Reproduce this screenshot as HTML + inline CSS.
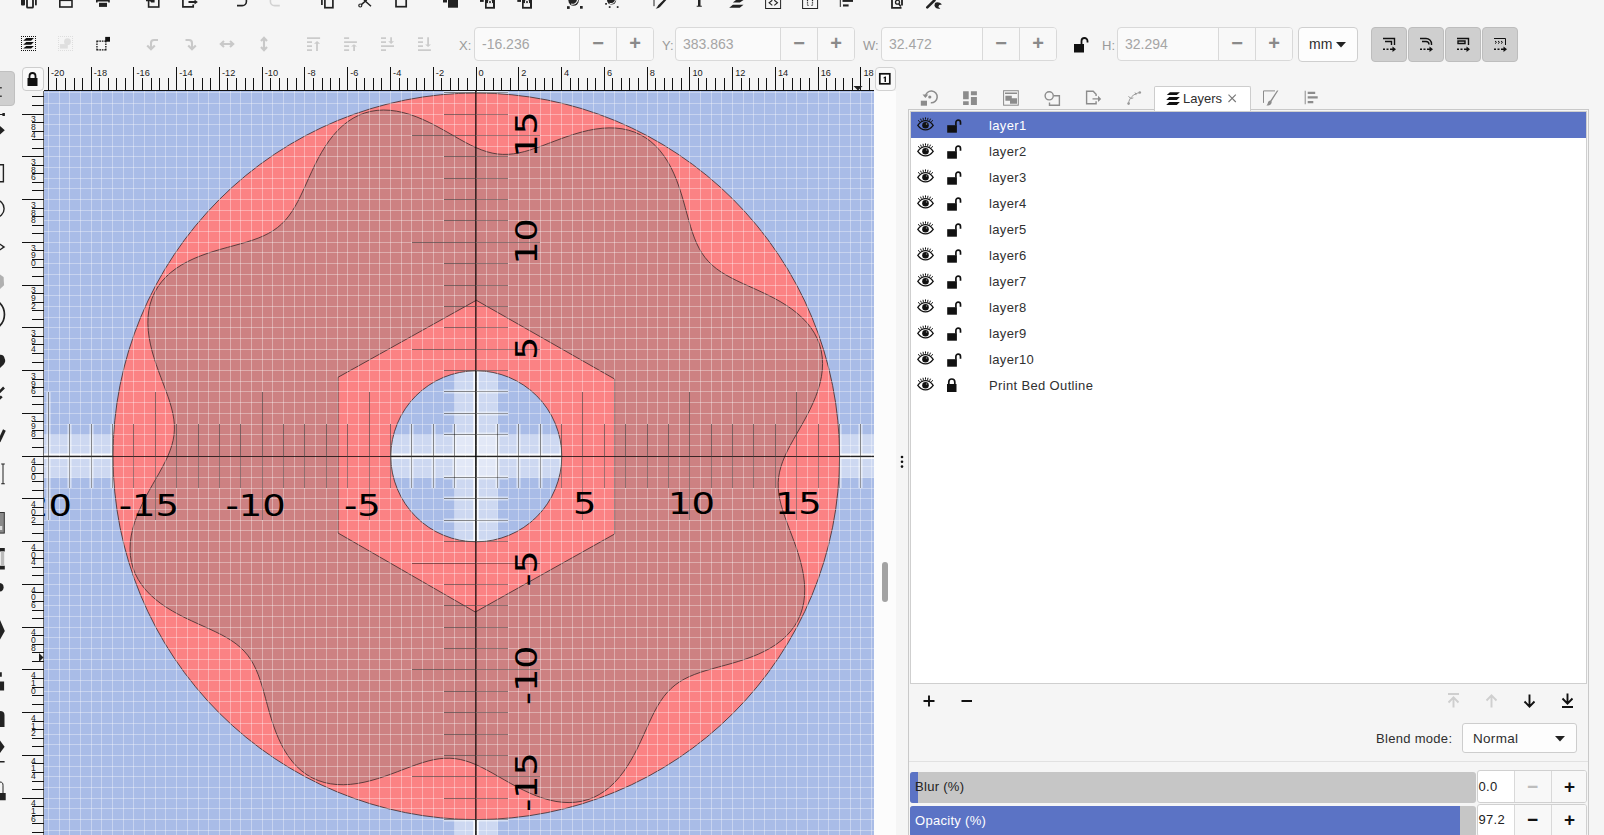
<!DOCTYPE html>
<html><head><meta charset="utf-8"><title>Inkscape</title>
<style>
*{box-sizing:border-box;margin:0;padding:0}
html,body{width:1604px;height:835px;overflow:hidden;background:#f5f5f5;font-family:"Liberation Sans",sans-serif;font-size:13px;color:#2e2e2e}
.abs,.cv,.b,.t,.i{position:absolute}
svg{display:block;overflow:hidden}
.fld{position:absolute;top:27px;height:34px;border:1px solid #d9d9d9;background:#fafafa;border-radius:4px;display:flex;overflow:hidden}
.fld span{display:block;height:100%;line-height:32px;color:#a5a5a5;font-size:14px}
.fld .v{padding-left:7px;flex:1}
.fld .m,.fld .p{width:37px;border-left:1px solid #d9d9d9;text-align:center;font-size:20px;font-weight:bold;color:#8a8a8a;background:#f8f8f8;line-height:31px}
.lab{position:absolute;top:38px;font-size:13px;color:#9a9a9a}
.tb{position:absolute;top:27px;height:35px;width:36px;background:#cfcfcf;border:1px solid #bdbdbd;border-radius:4px}
.row{position:absolute;left:911px;width:675px;height:26px;line-height:26px}
.row b{position:absolute;left:78px;top:.7px;letter-spacing:.35px;font-weight:normal;font-size:13px;color:#303030}
.row.sel{background:#5b73c5}
.row.sel b{color:#fff}
</style></head><body>

<!-- top command bar icons (cropped) -->
<svg class="abs" style="left:0;top:0" width="1604" height="14" viewBox="0 0 1604 14">
<g fill="#222" stroke="none">
<rect x="21" y="-2" width="4" height="7.600" rx="1"/><rect x="35" y="-2" width="1.800" height="7.600" rx=".8"/>
<path d="M96 0h13.800v2.600h-1.600v-1h-10.600v1H96z"/><rect x="99" y="2.800" width="8" height="4.100"/>
<path d="M146 0h8.600v2.400h-3.400l-1-1.100H146z"/>
<path d="M188.500 1h6v-1.400l3.400 2.400-3.400 2.400V3h-6z"/>
<rect x="448" y="-1" width="10" height="8.700"/><rect x="443" y="-1" width="4" height="3.500"/>
<rect x="485" y="-1" width="10" height="9.700"/><rect x="480" y="-1" width="3.700" height="2.900"/>
<rect x="522" y="-1" width="10" height="9.700"/><rect x="517.300" y="-1" width="3.700" height="2.900"/>
<circle cx="573.600" cy=".5" r="5.200"/><rect x="567" y="6.200" width="2.700" height="2.700"/><rect x="580" y="6" width="2.700" height="2.700"/>
<circle cx="611.600" cy="0" r="4.600"/><rect x="605.200" y="3" width="1.700" height="1.700"/><rect x="608.800" y="6.200" width="1.700" height="1.700"/><rect x="616.800" y="6.200" width="1.700" height="1.700"/>
<path d="M655.400 8.300c1.200-.2 2.200-1.800 3-3.300L663.500 0h2.800l-5.600 6.200c-1 1.400-3 2.500-5.300 2.100z"/>
<path d="M698 0h2.500v5.700h1.300v1.100h-5.100V5.700H698z"/>
<path d="M732.900 2.500L736 0h7.500l-3.700 2.500zM729.200 7.700l3.700-3h10.600l-3.700 3z"/>
<rect x="842.500" y="-1" width="10.500" height="2.900"/><rect x="843" y="4.400" width="5.600" height="2.100"/>
<path d="M935 3c2-1.300 5.200-.6 6.900 1.600l-2.700.4-.9 2.100 2 1.500c-2.600.8-5.400-.6-5.900-3.100z"/>
</g>
<g fill="#f5f5f5"><rect x="486.700" y="3.100" width="6.300" height="3.800"/><path d="M488 3.200V1.500a2 2 0 0 1 4 0v1.700h-1.200V1.600a.8.800 0 0 0-1.600 0v1.600z"/>
<rect x="523.700" y="3.100" width="6.300" height="3.800"/><path d="M525 3.200V1.500a2 2 0 0 1 4 0v1.700h-1.200V1.600a.8.800 0 0 0-1.600 0v1.600z"/>
<path d="M571 3.500a4.500 4.500 0 0 0 6-4.200l1.200.2a5.500 5.500 0 0 1-7.200 5z"/><path d="M609.500 2.800a4 4 0 0 0 5.500-3.500l1 .2a5 5 0 0 1-6.500 4.200z"/></g>
<g fill="none" stroke="#222">
<rect x="27" y="-2" width="6" height="9.700" rx=".8" stroke-width="1.800"/>
<rect x="59.800" y=".3" width="12.200" height="6.700" stroke-width="1.600"/>
<rect x="148.600" y="-2" width="10.200" height="9" stroke-width="1.600"/>
<path d="M182.900 0v6.900h10.300V4.400" stroke-width="1.700"/>
<path d="M237 5.600h5.200a4.200 4.200 0 0 0 4.200-4.200V0" stroke-width="1.600"/>
<path d="M321.900 0v5" stroke-width="1.700"/><rect x="324.900" y="-2" width="8" height="9.700" stroke-width="1.700"/>
<circle cx="360.300" cy="5.500" r="1.500" stroke-width="1.200"/><path d="M361.600 4.300L366.800 0M364 0l7 6.300" stroke-width="1.500"/>
<rect x="396" y="-2" width="10.200" height="8.700" stroke-width="1.700"/>
<path d="M654 0v6.200" stroke-width="1"/>
<rect x="765.600" y="-2" width="15" height="10.500" stroke-width="1"/><path d="M772.300 .2l-3.200 2.600 3.200 2.600M774.300 .2l3.200 2.600-3.200 2.600" stroke-width="1.100"/>
<rect x="802.600" y="-2" width="15" height="10.500" stroke-width="1"/><path d="M807.500 0v4.500q0 1 1 1M812.500 0v4.500q0 1-1 1" stroke-width="1.200" stroke-dasharray="1 .7"/>
<path d="M840.300 0v6.900" stroke-width="1"/>
<path d="M892 0v7.800h9.500M902 0v5.500" stroke-width="1.800"/><circle cx="897.500" cy="2.200" r="2" stroke-width="1.300"/><path d="M899 4l1.800 2.500" stroke-width="1.500"/>
<path d="M927.300 7.400L934.500 .3" stroke-width="2.600" stroke-linecap="round"/>
</g>
<path d="M279.800 5.600h-5.200a4.200 4.200 0 0 1-4.200-4.200V0" fill="none" stroke="#d2d2d2" stroke-width="1.600"/>
</svg>

<!-- tool controls bar icons -->
<svg class="abs" style="left:0;top:27px" width="460" height="34" viewBox="0 27 460 34">
<!-- layers w/ dotted border -->
<path d="M21 36.500H36M21 50.500H36M21.500 36V51M35.500 36V51" fill="none" stroke="#111" stroke-width="1" stroke-dasharray="1 1"/>
<path d="M26.300 38.100h7.600l-2.800 2.600h-7.900zM26.300 42h7.600l-2.800 2.800h-7.900zM26.300 46h7.600l-2.800 2.600h-7.900z" fill="#111"/>
<!-- disabled -->
<path d="M58 36.500H73M58 50.500H73M58.500 36V51M72.500 36V51" fill="none" stroke="#dedede" stroke-width="1" stroke-dasharray="1 1"/>
<circle cx="67.500" cy="41.700" r="3.400" fill="#dfdfdf"/><rect x="59.900" y="44.100" width="7.900" height="4.500" fill="#dfdfdf"/>
<!-- dashed square -->
<path d="M96.3 41.05H98.5M99.3 41.05H101M101.8 41.05H103.5M104.3 41.05H106.5M96.3 49.95H98.5M99.3 49.95H101M101.8 49.95H103.5M104.3 49.95H106.5M96.95 40.40V42.60M96.95 43.40V45.10M96.95 45.90V47.60M96.95 48.40V50.60M105.85 40.40V42.60M105.85 43.40V45.10M105.85 45.90V47.60M105.85 48.40V50.60" fill="none" stroke="#111" stroke-width="1.300"/>
<rect x="105.200" y="36.900" width="4.800" height="4.800" fill="#111"/>
<g fill="none" stroke="#c9c9c9" stroke-width="2.100" stroke-linecap="butt" stroke-linejoin="miter">
<path d="M158 40h-4a3 3 0 0 0-3 3v6M147.200 45.500l3.800 3.800 3.800-3.800"/>
<path d="M185.500 40h3.500a3 3 0 0 1 3 3v6M188.200 45.500l3.800 3.800 3.800-3.800"/>
<path d="M221 44h12M224 41l-3.200 3 3.200 3M230 41l3.200 3-3.200 3"/>
<path d="M264 38v12M261 41l3-3.200 3 3.200M261 47l3 3.200 3-3.200"/>
</g>
<path d="M307 37.2h13.1v1.7h-13.1zM307 41.2h5v1.7h-5zM307 45.3h5v1.7h-5zM307 49.2h5v1.7h-5zM316.100 50.900V43.800h-2.100l3.050-2.800 3.050 2.800h-2.200v7.100zM344.1 37.2h5v1.7h-5zM344.1 41.2h12.8v1.7h-12.8zM344.1 45.3h5v1.7h-5zM344.1 49.2h5v1.7h-5zM353.200 50.900V46.600h-2.200l3-2.400 3 2.400h-2v4.300zM381 37.2h5v1.7h-5zM381 41.2h5v1.7h-5zM381 45.3h13v1.7h-13zM381 49.2h5v1.7h-5zM390.200 37.200v4.100h-2l2.900 2.600 2.900-2.600h-2v-4.100zM418 37.2h5v1.7h-5zM418 41.2h5v1.7h-5zM418 45.3h5v1.7h-5zM418 49.2h12.9v1.7h-12.9zM427.200 37.200v7.200h-2.100l2.950 2.500 2.950-2.500h-2v-7.200z" fill="#cbcbcb"/>
</svg>

<!-- XYWH fields -->
<div class="lab" style="left:459px">X:</div>
<div class="fld" style="left:474px;width:180px"><span class="v">-16.236</span><span class="m">−</span><span class="p">+</span></div>
<div class="lab" style="left:662px">Y:</div>
<div class="fld" style="left:675px;width:180px"><span class="v">383.863</span><span class="m">−</span><span class="p">+</span></div>
<div class="lab" style="left:863px">W:</div>
<div class="fld" style="left:881px;width:176px"><span class="v">32.472</span><span class="m">−</span><span class="p">+</span></div>
<svg class="abs" style="left:1072px;top:35px" width="18" height="19" viewBox="0 0 18 19"><rect x="2" y="9" width="10" height="8.500" fill="#111"/><path d="M9.500 9V6a3 3 0 0 1 6 0v1.500" fill="none" stroke="#111" stroke-width="1.800"/></svg>
<div class="lab" style="left:1102px">H:</div>
<div class="fld" style="left:1117px;width:176px"><span class="v">32.294</span><span class="m">−</span><span class="p">+</span></div>
<div class="abs" style="left:1298px;top:27px;width:60px;height:35px;border:1px solid #cfcfcf;border-radius:4px;background:#fdfdfd;line-height:32px;padding-left:10px;font-size:14px;color:#2e2e2e">mm<svg class="abs" style="left:37px;top:14px" width="10" height="6" viewBox="0 0 10 6"><path d="M0 0h10l-5 5.500z" fill="#222"/></svg></div>

<div class="tb" style="left:1371px"></div><div class="tb" style="left:1408px"></div><div class="tb" style="left:1445px"></div><div class="tb" style="left:1482px"></div>
<svg class="abs" style="left:1371px;top:27px" width="150" height="35" viewBox="1371 27 150 35">
<g fill="none" stroke="#111" stroke-width="1.400">
<path d="M1383 38.500h11.500V45M1385 41.500h6.500V45"/>
<path d="M1420 38.500h6a5.500 5.500 0 0 1 5.500 5.500v1M1422 41.500h4a3 3 0 0 1 3 3"/>
<path d="M1457 38.500h11.500V45M1458 41h7v2.500h-7z"/>
<path d="M1494 38.500h11.500V45M1495 41l1.500 1.300-1.500 1.300M1498 41l1.500 1.300-1.500 1.300M1501 41l1.500 1.300-1.500 1.300" stroke-width="1"/>
</g>
<g fill="#111">
<path d="M1383 48.500h2v1.500h-2zM1386.500 48.500h2v1.500h-2zM1390 48.500h2.500v-2l3.500 2.800-3.500 2.800v-2h-2.500z"/>
<path d="M1420 48.500h2v1.500h-2zM1423.500 48.500h2v1.500h-2zM1427 48.500h2.500v-2l3.500 2.800-3.500 2.800v-2h-2.500z"/>
<path d="M1457 48.500h2v1.500h-2zM1460.500 48.500h2v1.500h-2zM1464 48.500h2.500v-2l3.500 2.800-3.500 2.800v-2h-2.500z"/>
<path d="M1494 48.500h2v1.500h-2zM1497.500 48.500h2v1.500h-2zM1501 48.500h2.500v-2l3.500 2.800-3.500 2.800v-2h-2.500z"/>
</g></svg>

<!-- left toolbox (cropped) -->
<div class="abs" style="left:-6px;top:71px;width:21px;height:35px;background:#cfcfcf;border:1px solid #c0c0c0;border-radius:4px"></div>
<svg class="abs" style="left:0;top:60px" width="16" height="775" viewBox="0 60 16 775">
<g fill="#222">
<path d="M0 87h1.800v1.400H0zM0 95.500h1.800v1.400H0z" fill="#444"/>
<path d="M0 114h2.400v-1.100h2.500v3.200H2.400v-1H0zM0 126l4.800 4.200L0 134.500z"/>
<path d="M0 164h4.100v18.400H0v-1.400h2.700v-15.600H0z"/>
<circle cx="-4.900" cy="208.650" r="9" fill="none" stroke="#222" stroke-width="1.400"/>
<path d="M0 243.400l5.300 3.600L0 250.600v-1.600l2.800-2L0 245z"/>
<path d="M0 274.600l3.600 2.400.5 8.300L0 289z" fill="#b0b0b0"/>
<circle cx="-11.850" cy="314.400" r="16.300" fill="none" stroke="#222" stroke-width="1.700"/>
<path d="M0 354.800c2.500-.3 4.400 1.400 4.600 3.600.6 1 .9 2.600.2 4.200-.8 1.900-2.600 3.600-4.800 5.400z"/>
<path d="M-1 392.500l5-5M-1 399l2.800-2.600" stroke="#222" stroke-width="2.600" fill="none"/>
<path d="M-1 441.500l5.400-11.500" stroke="#222" stroke-width="3" fill="none"/>
<path d="M1.200 463.400h3.600v1H3.500v18.800h1.300v1H1.200v-1h1.300v-18.800H1.200z"/>
<path d="M0 548h4.800v3.400H0zM0 565.800h4.800v3.700H0z"/>
<path d="M0 583c2.200.2 3.600 1.800 3.600 4.200S2.200 591.300 0 591.500z"/>
<path d="M0 620l4.800 11L0 639.400z"/>
<path d="M0 672.300h1.800v4.500H0zM0 681.400h4.100v9.100H0z"/>
<path d="M0 711c3 0 4.500 1.600 4.500 4v12H0z"/>
<path d="M0 740.600l4.600 6.200L0 753z"/>
<path d="M0 761h4.600v1.400H0zM0 793h5.700v7.200H0z"/>
</g>
<rect x="-1" y="512.500" width="5.300" height="20.600" fill="#8a8a8a" stroke="#333" stroke-width="1"/><rect x="0" y="526" width="2.200" height="4" fill="#ddd"/>
<rect x=".8" y="551.400" width="3.400" height="14.400" fill="#bbb"/>
<path d="M0 782c2.200 0 3 1.200 3 3.200V793" fill="none" stroke="#222" stroke-width="1"/>
</svg>

<!-- ruler lock + page button -->
<div class="abs" style="left:22px;top:67px;width:22px;height:23.500px;border:1px solid #cdcdcd;border-radius:4px;background:#f9f9f9"></div>
<svg class="abs" style="left:26px;top:71px" width="14" height="16" viewBox="0 0 14 16"><rect x="1.500" y="7" width="10" height="8" fill="#111"/><path d="M3.500 7.500V5a3 3 0 0 1 6 0v2.500" fill="none" stroke="#111" stroke-width="1.800"/></svg>
<div class="abs" style="left:874.500px;top:67px;width:21.500px;height:23.500px;border:1px solid #d2d2d2;border-radius:4px;background:#f9f9f9"></div>
<svg class="abs" style="left:878px;top:72px" width="14" height="14" viewBox="0 0 14 14"><rect x="1.800" y="1.800" width="10" height="10" fill="#fff" stroke="#111" stroke-width="1.700"/><path d="M5.500 5.500l1.500-1h1v5.500H6.500V6l-1 .5z" fill="#111"/></svg>

<svg class="abs" style="left:0;top:60px" width="900" height="40" viewBox="0 60 900 40">
<path d="M48.5 67V91M56.5 78V91M65.5 78V91M74.5 78V91M82.5 78V91M91.5 67V91M99.5 78V91M108.5 78V91M116.5 78V91M125.5 78V91M133.5 67V91M142.5 78V91M151.5 78V91M159.5 78V91M168.5 78V91M176.5 67V91M185.5 78V91M193.5 78V91M202.5 78V91M210.5 78V91M219.5 67V91M227.5 78V91M236.5 78V91M245.5 78V91M253.5 78V91M262.5 67V91M270.5 78V91M279.5 78V91M287.5 78V91M296.5 78V91M304.5 67V91M313.5 78V91M322.5 78V91M330.5 78V91M339.5 78V91M347.5 67V91M356.5 78V91M364.5 78V91M373.5 78V91M381.5 78V91M390.5 67V91M399.5 78V91M407.5 78V91M416.5 78V91M424.5 78V91M433.5 67V91M441.5 78V91M450.5 78V91M458.5 78V91M467.5 78V91M476.5 67V91M484.5 78V91M493.5 78V91M501.5 78V91M510.5 78V91M518.5 67V91M527.5 78V91M535.5 78V91M544.5 78V91M552.5 78V91M561.5 67V91M570.5 78V91M578.5 78V91M587.5 78V91M595.5 78V91M604.5 67V91M612.5 78V91M621.5 78V91M629.5 78V91M638.5 78V91M647.5 67V91M655.5 78V91M664.5 78V91M672.5 78V91M681.5 78V91M689.5 67V91M698.5 78V91M706.5 78V91M715.5 78V91M724.5 78V91M732.5 67V91M741.5 78V91M749.5 78V91M758.5 78V91M766.5 78V91M775.5 67V91M783.5 78V91M792.5 78V91M800.5 78V91M809.5 78V91M818.5 67V91M826.5 78V91M835.5 78V91M843.5 78V91M852.5 78V91M860.5 67V91M869.5 78V91" stroke="#111" stroke-width="1" fill="none"/>
<path d="M44 90.5H874" stroke="#111" stroke-width="1.2"/>
<g font-family="Liberation Sans, sans-serif" font-size="9.2" fill="#222">
<text x="51" y="76.3">-20</text>
<text x="93.76" y="76.3">-18</text>
<text x="136.52" y="76.3">-16</text>
<text x="179.28" y="76.3">-14</text>
<text x="222.04" y="76.3">-12</text>
<text x="264.8" y="76.3">-10</text>
<text x="307.56" y="76.3">-8</text>
<text x="350.32" y="76.3">-6</text>
<text x="393.08" y="76.3">-4</text>
<text x="435.84" y="76.3">-2</text>
<text x="478.6" y="76.3">0</text>
<text x="521.36" y="76.3">2</text>
<text x="564.12" y="76.3">4</text>
<text x="606.88" y="76.3">6</text>
<text x="649.64" y="76.3">8</text>
<text x="692.4" y="76.3">10</text>
<text x="735.16" y="76.3">12</text>
<text x="777.92" y="76.3">14</text>
<text x="820.68" y="76.3">16</text>
<text x="863.44" y="76.3">18</text>
</g>
<path d="M853.5 86h9l-4.5 4.5z" fill="#222"/>
</svg>
<svg class="abs" style="left:20px;top:91px" width="25" height="744" viewBox="20 91 25 744">
<path d="M32 96.5H44M32 105.5H44M22 114.5H44M32 122.5H44M32 131.5H44M32 139.5H44M32 148.5H44M22 156.5H44M32 165.5H44M32 173.5H44M32 182.5H44M32 190.5H44M22 199.5H44M32 208.5H44M32 216.5H44M32 225.5H44M32 233.5H44M22 242.5H44M32 250.5H44M32 259.5H44M32 267.5H44M32 276.5H44M22 285.5H44M32 293.5H44M32 302.5H44M32 310.5H44M32 319.5H44M22 327.5H44M32 336.5H44M32 344.5H44M32 353.5H44M32 362.5H44M22 370.5H44M32 379.5H44M32 387.5H44M32 396.5H44M32 404.5H44M22 413.5H44M32 421.5H44M32 430.5H44M32 438.5H44M32 447.5H44M22 456.5H44M32 464.5H44M32 473.5H44M32 481.5H44M32 490.5H44M22 498.5H44M32 507.5H44M32 515.5H44M32 524.5H44M32 533.5H44M22 541.5H44M32 550.5H44M32 558.5H44M32 567.5H44M32 575.5H44M22 584.5H44M32 592.5H44M32 601.5H44M32 610.5H44M32 618.5H44M22 627.5H44M32 635.5H44M32 644.5H44M32 652.5H44M32 661.5H44M22 669.5H44M32 678.5H44M32 687.5H44M32 695.5H44M32 704.5H44M22 712.5H44M32 721.5H44M32 729.5H44M32 738.5H44M32 746.5H44M22 755.5H44M32 763.5H44M32 772.5H44M32 781.5H44M32 789.5H44M22 798.5H44M32 806.5H44M32 815.5H44M32 823.5H44M32 832.5H44" stroke="#111" stroke-width="1" fill="none"/>
<path d="M44 91V835" stroke="#111" stroke-width="1.2"/>
<g font-family="Liberation Sans, sans-serif" font-size="8.6" fill="#222" text-anchor="middle">
<text x="33.4" y="122.32">3</text>
<text x="33.4" y="130.02">8</text>
<text x="33.4" y="137.72">4</text>
<text x="33.4" y="165.08">3</text>
<text x="33.4" y="172.78">8</text>
<text x="33.4" y="180.48">6</text>
<text x="33.4" y="207.84">3</text>
<text x="33.4" y="215.54">8</text>
<text x="33.4" y="223.24">8</text>
<text x="33.4" y="250.6">3</text>
<text x="33.4" y="258.3">9</text>
<text x="33.4" y="266">0</text>
<text x="33.4" y="293.36">3</text>
<text x="33.4" y="301.06">9</text>
<text x="33.4" y="308.76">2</text>
<text x="33.4" y="336.12">3</text>
<text x="33.4" y="343.82">9</text>
<text x="33.4" y="351.52">4</text>
<text x="33.4" y="378.88">3</text>
<text x="33.4" y="386.58">9</text>
<text x="33.4" y="394.28">6</text>
<text x="33.4" y="421.64">3</text>
<text x="33.4" y="429.34">9</text>
<text x="33.4" y="437.04">8</text>
<text x="33.4" y="464.4">4</text>
<text x="33.4" y="472.1">0</text>
<text x="33.4" y="479.8">0</text>
<text x="33.4" y="507.16">4</text>
<text x="33.4" y="514.86">0</text>
<text x="33.4" y="522.56">2</text>
<text x="33.4" y="549.92">4</text>
<text x="33.4" y="557.62">0</text>
<text x="33.4" y="565.32">4</text>
<text x="33.4" y="592.68">4</text>
<text x="33.4" y="600.38">0</text>
<text x="33.4" y="608.08">6</text>
<text x="33.4" y="635.44">4</text>
<text x="33.4" y="643.14">0</text>
<text x="33.4" y="650.84">8</text>
<text x="33.4" y="678.2">4</text>
<text x="33.4" y="685.9">1</text>
<text x="33.4" y="693.6">0</text>
<text x="33.4" y="720.96">4</text>
<text x="33.4" y="728.66">1</text>
<text x="33.4" y="736.36">2</text>
<text x="33.4" y="763.72">4</text>
<text x="33.4" y="771.42">1</text>
<text x="33.4" y="779.12">4</text>
<text x="33.4" y="806.48">4</text>
<text x="33.4" y="814.18">1</text>
<text x="33.4" y="821.88">6</text>
</g>
<path d="M39 653v9l4.5-4.5z" fill="#222"/>
</svg>
<svg class="cv" style="left:44px;top:91px" width="830" height="744" viewBox="44 91 830 744">
<rect x="44" y="91" width="830" height="744" fill="#a9bce7"/>
<rect x="44" y="434.93" width="830" height="42.74" fill="#fff" fill-opacity=".42"/>
<rect x="454.93" y="91" width="42.74" height="744" fill="#fff" fill-opacity=".42"/>
<path d="M44 456.2H874M476 91V835" stroke="#fff" stroke-opacity=".85" stroke-width="5.4" fill="none"/>
<path d="M48.5 392V520M69.5 424V488M91.5 424V488M112.5 424V488M133.5 424V488M155.5 392V520M176.5 424V488M198.5 424V488M219.5 424V488M240.5 424V488M262.5 392V520M283.5 424V488M304.5 424V488M326.5 424V488M347.5 424V488M369.5 392V520M390.5 424V488M411.5 424V488M433.5 424V488M454.5 424V488M497.5 424V488M518.5 424V488M540.5 424V488M561.5 424V488M582.5 392V520M604.5 424V488M625.5 424V488M647.5 424V488M668.5 424V488M689.5 392V520M711.5 424V488M732.5 424V488M753.5 424V488M775.5 424V488M796.5 392V520M818.5 424V488M839.5 424V488M860.5 424V488M444 819.5H508M444 798.5H508M412 776.5H540M444 755.5H508M444 734.5H508M444 712.5H508M444 691.5H508M412 669.5H540M444 648.5H508M444 627.5H508M444 605.5H508M444 584.5H508M412 563.5H540M444 541.5H508M444 520.5H508M444 498.5H508M444 477.5H508M444 434.5H508M444 413.5H508M444 391.5H508M444 370.5H508M412 349.5H540M444 327.5H508M444 306.5H508M444 285.5H508M444 263.5H508M412 242.5H540M444 220.5H508M444 199.5H508M444 178.5H508M444 156.5H508M412 135.5H540M444 114.5H508M444 92.5H508" stroke="#fff" stroke-opacity=".5" stroke-width="4.2" fill="none"/>
<path d="M476 91V835M44 456.4H874" stroke="#000" stroke-opacity=".5" stroke-width="1.6" fill="none"/>
<circle cx="476.3" cy="456.3" r="363.29" fill="#fb8284" stroke="#3a2a2a" stroke-width=".8"/>
<path d="M784.84 456.3 L787.39 450.87 L790.25 445.34 L793.36 439.68 L796.65 433.9 L800.05 427.98 L803.47 421.91 L806.83 415.72 L810.06 409.39 L813.06 402.96 L815.78 396.44 L818.12 389.86 L820.03 383.24 L821.44 376.62 L822.3 370.03 L822.58 363.52 L822.24 357.1 L821.26 350.84 L819.63 344.74 L817.37 338.86 L814.47 333.21 L810.98 327.83 L806.93 322.72 L802.36 317.9 L797.32 313.37 L791.89 309.14 L786.13 305.19 L780.1 301.51 L773.88 298.07 L767.56 294.85 L761.2 291.82 L754.87 288.92 L748.64 286.12 L742.58 283.38 L736.74 280.63 L731.17 277.84 L725.91 274.95 L721 271.91 L716.45 268.68 L712.27 265.22 L708.47 261.49 L705.03 257.47 L701.94 253.13 L699.18 248.46 L696.7 243.46 L694.47 238.13 L692.44 232.49 L690.55 226.55 L688.75 220.35 L686.98 213.94 L685.2 207.35 L683.33 200.64 L681.32 193.88 L679.13 187.13 L676.71 180.46 L674.02 173.93 L671.02 167.62 L667.69 161.59 L664.01 155.91 L659.96 150.64 L655.55 145.84 L650.77 141.54 L645.65 137.81 L640.19 134.65 L634.43 132.09 L628.39 130.14 L622.11 128.8 L615.63 128.05 L608.99 127.88 L602.23 128.24 L595.4 129.08 L588.53 130.37 L581.66 132.03 L574.84 133.99 L568.09 136.19 L561.44 138.54 L554.92 140.97 L548.54 143.39 L542.31 145.74 L536.24 147.93 L530.33 149.89 L524.57 151.56 L518.94 152.89 L513.44 153.82 L508.04 154.33 L502.71 154.38 L497.44 153.97 L492.19 153.08 L486.94 151.74 L481.65 149.95 L476.3 147.76 L470.87 145.21 L465.34 142.35 L459.68 139.24 L453.9 135.95 L447.98 132.55 L441.91 129.13 L435.72 125.77 L429.39 122.54 L422.96 119.54 L416.44 116.82 L409.86 114.48 L403.24 112.57 L396.62 111.16 L390.03 110.3 L383.52 110.02 L377.1 110.36 L370.84 111.34 L364.74 112.97 L358.86 115.23 L353.21 118.13 L347.83 121.62 L342.72 125.67 L337.9 130.24 L333.37 135.28 L329.14 140.71 L325.19 146.47 L321.51 152.5 L318.07 158.72 L314.85 165.04 L311.82 171.4 L308.92 177.73 L306.12 183.96 L303.38 190.02 L300.63 195.86 L297.84 201.43 L294.95 206.69 L291.91 211.6 L288.68 216.15 L285.22 220.33 L281.49 224.13 L277.47 227.57 L273.13 230.66 L268.46 233.42 L263.46 235.9 L258.13 238.13 L252.49 240.16 L246.55 242.05 L240.35 243.85 L233.94 245.62 L227.35 247.4 L220.64 249.27 L213.88 251.28 L207.13 253.47 L200.46 255.89 L193.93 258.58 L187.62 261.58 L181.59 264.91 L175.91 268.59 L170.64 272.64 L165.84 277.05 L161.54 281.83 L157.81 286.95 L154.65 292.41 L152.09 298.17 L150.14 304.21 L148.8 310.49 L148.05 316.97 L147.88 323.61 L148.24 330.37 L149.08 337.2 L150.37 344.07 L152.03 350.94 L153.99 357.76 L156.19 364.51 L158.54 371.16 L160.97 377.68 L163.39 384.06 L165.74 390.29 L167.93 396.36 L169.89 402.27 L171.56 408.03 L172.89 413.66 L173.82 419.16 L174.33 424.56 L174.38 429.89 L173.97 435.16 L173.08 440.41 L171.74 445.66 L169.95 450.95 L167.76 456.3 L165.21 461.73 L162.35 467.26 L159.24 472.92 L155.95 478.7 L152.55 484.62 L149.13 490.69 L145.77 496.88 L142.54 503.21 L139.54 509.64 L136.82 516.16 L134.48 522.74 L132.57 529.36 L131.16 535.98 L130.3 542.57 L130.02 549.08 L130.36 555.5 L131.34 561.76 L132.97 567.86 L135.23 573.74 L138.13 579.39 L141.62 584.77 L145.67 589.88 L150.24 594.7 L155.28 599.23 L160.71 603.46 L166.47 607.41 L172.5 611.09 L178.72 614.53 L185.04 617.75 L191.4 620.78 L197.73 623.68 L203.96 626.48 L210.02 629.22 L215.86 631.97 L221.43 634.76 L226.69 637.65 L231.6 640.69 L236.15 643.92 L240.33 647.38 L244.13 651.11 L247.57 655.13 L250.66 659.47 L253.42 664.14 L255.9 669.14 L258.13 674.47 L260.16 680.11 L262.05 686.05 L263.85 692.25 L265.62 698.66 L267.4 705.25 L269.27 711.96 L271.28 718.72 L273.47 725.47 L275.89 732.14 L278.58 738.67 L281.58 744.98 L284.91 751.01 L288.59 756.69 L292.64 761.96 L297.05 766.76 L301.83 771.06 L306.95 774.79 L312.41 777.95 L318.17 780.51 L324.21 782.46 L330.49 783.8 L336.97 784.55 L343.61 784.72 L350.37 784.36 L357.2 783.52 L364.07 782.23 L370.94 780.57 L377.76 778.61 L384.51 776.41 L391.16 774.06 L397.68 771.63 L404.06 769.21 L410.29 766.86 L416.36 764.67 L422.27 762.71 L428.03 761.04 L433.66 759.71 L439.16 758.78 L444.56 758.27 L449.89 758.22 L455.16 758.63 L460.41 759.52 L465.66 760.86 L470.95 762.65 L476.3 764.84 L481.73 767.39 L487.26 770.25 L492.92 773.36 L498.7 776.65 L504.62 780.05 L510.69 783.47 L516.88 786.83 L523.21 790.06 L529.64 793.06 L536.16 795.78 L542.74 798.12 L549.36 800.03 L555.98 801.44 L562.57 802.3 L569.08 802.58 L575.5 802.24 L581.76 801.26 L587.86 799.63 L593.74 797.37 L599.39 794.47 L604.77 790.98 L609.88 786.93 L614.7 782.36 L619.23 777.32 L623.46 771.89 L627.41 766.13 L631.09 760.1 L634.53 753.88 L637.75 747.56 L640.78 741.2 L643.68 734.87 L646.48 728.64 L649.22 722.58 L651.97 716.74 L654.76 711.17 L657.65 705.91 L660.69 701 L663.92 696.45 L667.38 692.27 L671.11 688.47 L675.13 685.03 L679.47 681.94 L684.14 679.18 L689.14 676.7 L694.47 674.47 L700.11 672.44 L706.05 670.55 L712.25 668.75 L718.66 666.98 L725.25 665.2 L731.96 663.33 L738.72 661.32 L745.47 659.13 L752.14 656.71 L758.67 654.02 L764.98 651.02 L771.01 647.69 L776.69 644.01 L781.96 639.96 L786.76 635.55 L791.06 630.77 L794.79 625.65 L797.95 620.19 L800.51 614.43 L802.46 608.39 L803.8 602.11 L804.55 595.63 L804.72 588.99 L804.36 582.23 L803.52 575.4 L802.23 568.53 L800.57 561.66 L798.61 554.84 L796.41 548.09 L794.06 541.44 L791.63 534.92 L789.21 528.54 L786.86 522.31 L784.67 516.24 L782.71 510.33 L781.04 504.57 L779.71 498.94 L778.78 493.44 L778.27 488.04 L778.22 482.71 L778.63 477.44 L779.52 472.19 L780.86 466.94 L782.65 461.65Z" fill="#cd8182" stroke="#3a2a2a" stroke-width=".8"/>
<polygon points="476.3,300.3 614.6,379 614.6,534 475.3,612 338,533 338,377.3" fill="#fb8284" stroke="#3a2a2a" stroke-width=".8"/>
<clipPath id="hole"><circle cx="476.3" cy="456.3" r="85.48"/></clipPath>
<g clip-path="url(#hole)"><rect x="380" y="360" width="200" height="200" fill="#a9bce7"/>
<rect x="380" y="434.93" width="200" height="42.74" fill="#fff" fill-opacity=".42"/>
<rect x="454.93" y="360" width="42.74" height="200" fill="#fff" fill-opacity=".42"/><path d="M380 456.2H580M476 360V560" stroke="#fff" stroke-opacity=".85" stroke-width="5.4" fill="none"/><path d="M48.5 392V520M69.5 424V488M91.5 424V488M112.5 424V488M133.5 424V488M155.5 392V520M176.5 424V488M198.5 424V488M219.5 424V488M240.5 424V488M262.5 392V520M283.5 424V488M304.5 424V488M326.5 424V488M347.5 424V488M369.5 392V520M390.5 424V488M411.5 424V488M433.5 424V488M454.5 424V488M497.5 424V488M518.5 424V488M540.5 424V488M561.5 424V488M582.5 392V520M604.5 424V488M625.5 424V488M647.5 424V488M668.5 424V488M689.5 392V520M711.5 424V488M732.5 424V488M753.5 424V488M775.5 424V488M796.5 392V520M818.5 424V488M839.5 424V488M860.5 424V488M444 819.5H508M444 798.5H508M412 776.5H540M444 755.5H508M444 734.5H508M444 712.5H508M444 691.5H508M412 669.5H540M444 648.5H508M444 627.5H508M444 605.5H508M444 584.5H508M412 563.5H540M444 541.5H508M444 520.5H508M444 498.5H508M444 477.5H508M444 434.5H508M444 413.5H508M444 391.5H508M444 370.5H508M412 349.5H540M444 327.5H508M444 306.5H508M444 285.5H508M444 263.5H508M412 242.5H540M444 220.5H508M444 199.5H508M444 178.5H508M444 156.5H508M412 135.5H540M444 114.5H508M444 92.5H508" stroke="#fff" stroke-opacity=".5" stroke-width="4.2" fill="none"/><path d="M476 91V835M44 456.4H874" stroke="#000" stroke-opacity=".5" stroke-width="1.6" fill="none"/></g>
<circle cx="476.3" cy="456.3" r="85.48" fill="none" stroke="#3a2a2a" stroke-width=".8"/>
<path d="M48.5 91V835M59.5 91V835M69.5 91V835M80.5 91V835M91.5 91V835M101.5 91V835M112.5 91V835M123.5 91V835M133.5 91V835M144.5 91V835M155.5 91V835M165.5 91V835M176.5 91V835M187.5 91V835M198.5 91V835M208.5 91V835M219.5 91V835M230.5 91V835M240.5 91V835M251.5 91V835M262.5 91V835M272.5 91V835M283.5 91V835M294.5 91V835M304.5 91V835M315.5 91V835M326.5 91V835M337.5 91V835M347.5 91V835M358.5 91V835M369.5 91V835M379.5 91V835M390.5 91V835M401.5 91V835M411.5 91V835M422.5 91V835M433.5 91V835M443.5 91V835M454.5 91V835M465.5 91V835M486.5 91V835M497.5 91V835M508.5 91V835M518.5 91V835M529.5 91V835M540.5 91V835M550.5 91V835M561.5 91V835M572.5 91V835M582.5 91V835M593.5 91V835M604.5 91V835M614.5 91V835M625.5 91V835M636.5 91V835M647.5 91V835M657.5 91V835M668.5 91V835M679.5 91V835M689.5 91V835M700.5 91V835M711.5 91V835M721.5 91V835M732.5 91V835M743.5 91V835M753.5 91V835M764.5 91V835M775.5 91V835M786.5 91V835M796.5 91V835M807.5 91V835M818.5 91V835M828.5 91V835M839.5 91V835M850.5 91V835M860.5 91V835M871.5 91V835M44 92.5H874M44 103.5H874M44 114.5H874M44 124.5H874M44 135.5H874M44 146.5H874M44 156.5H874M44 167.5H874M44 178.5H874M44 188.5H874M44 199.5H874M44 210.5H874M44 220.5H874M44 231.5H874M44 242.5H874M44 252.5H874M44 263.5H874M44 274.5H874M44 285.5H874M44 295.5H874M44 306.5H874M44 317.5H874M44 327.5H874M44 338.5H874M44 349.5H874M44 359.5H874M44 370.5H874M44 381.5H874M44 391.5H874M44 402.5H874M44 413.5H874M44 424.5H874M44 434.5H874M44 445.5H874M44 466.5H874M44 477.5H874M44 488.5H874M44 498.5H874M44 509.5H874M44 520.5H874M44 530.5H874M44 541.5H874M44 552.5H874M44 562.5H874M44 573.5H874M44 584.5H874M44 595.5H874M44 605.5H874M44 616.5H874M44 627.5H874M44 637.5H874M44 648.5H874M44 659.5H874M44 669.5H874M44 680.5H874M44 691.5H874M44 701.5H874M44 712.5H874M44 723.5H874M44 734.5H874M44 744.5H874M44 755.5H874M44 766.5H874M44 776.5H874M44 787.5H874M44 798.5H874M44 808.5H874M44 819.5H874M44 830.5H874" stroke="#fff" stroke-opacity=".35" stroke-width="1" fill="none"/>
<path d="M48.5 392V456M69.5 424V456M91.5 424V456M112.5 424V456M133.5 424V456M155.5 392V456M176.5 424V456M198.5 424V456M219.5 424V456M240.5 424V456M262.5 392V456M283.5 424V456M304.5 424V456M326.5 424V456M347.5 424V456M369.5 392V456M390.5 424V456M411.5 424V456M433.5 424V456M454.5 424V456M497.5 424V456M518.5 424V456M540.5 424V456M561.5 424V456M582.5 392V456M604.5 424V456M625.5 424V456M647.5 424V456M668.5 424V456M689.5 392V456M711.5 424V456M732.5 424V456M753.5 424V456M775.5 424V456M796.5 392V456M818.5 424V456M839.5 424V456M860.5 424V456M444 819.5H475M444 798.5H475M412 776.5H475M444 755.5H475M444 734.5H475M444 712.5H475M444 691.5H475M412 669.5H475M444 648.5H475M444 627.5H475M444 605.5H475M444 584.5H475M412 563.5H475M444 541.5H475M444 520.5H475M444 498.5H475M444 477.5H475M444 434.5H475M444 413.5H475M444 391.5H475M444 370.5H475M412 349.5H475M444 327.5H475M444 306.5H475M444 285.5H475M444 263.5H475M412 242.5H475M444 220.5H475M444 199.5H475M444 178.5H475M444 156.5H475M412 135.5H475M444 114.5H475M444 92.5H475" stroke="#000" stroke-opacity=".45" stroke-width="1" fill="none"/>
<path d="M48.5 457V520M69.5 457V488M91.5 457V488M112.5 457V488M133.5 457V488M155.5 457V520M176.5 457V488M198.5 457V488M219.5 457V488M240.5 457V488M262.5 457V520M283.5 457V488M304.5 457V488M326.5 457V488M347.5 457V488M369.5 457V520M390.5 457V488M411.5 457V488M433.5 457V488M454.5 457V488M497.5 457V488M518.5 457V488M540.5 457V488M561.5 457V488M582.5 457V520M604.5 457V488M625.5 457V488M647.5 457V488M668.5 457V488M689.5 457V520M711.5 457V488M732.5 457V488M753.5 457V488M775.5 457V488M796.5 457V520M818.5 457V488M839.5 457V488M860.5 457V488M477 819.5H508M477 798.5H508M477 776.5H540M477 755.5H508M477 734.5H508M477 712.5H508M477 691.5H508M477 669.5H540M477 648.5H508M477 627.5H508M477 605.5H508M477 584.5H508M477 563.5H540M477 541.5H508M477 520.5H508M477 498.5H508M477 477.5H508M477 434.5H508M477 413.5H508M477 391.5H508M477 370.5H508M477 349.5H540M477 327.5H508M477 306.5H508M477 285.5H508M477 263.5H508M477 242.5H540M477 220.5H508M477 199.5H508M477 178.5H508M477 156.5H508M477 135.5H540M477 114.5H508M477 92.5H508" stroke="#000" stroke-opacity=".36" stroke-width="1" fill="none"/>
<path d="M475.5 91V835M44 456.5H874" stroke="#000" stroke-opacity=".72" stroke-width="1" fill="none"/>
<path d="M476.5 91V835" stroke="#000" stroke-opacity=".45" stroke-width="1" fill="none"/>
<g font-family="DejaVu Sans, sans-serif" font-size="31" fill="#000">
<text transform="translate(41.9 516.2) scale(1.19 1)" text-anchor="middle">-20</text>
<text transform="translate(148.75 516.2) scale(1.19 1)" text-anchor="middle">-15</text>
<text transform="translate(255.6 516.2) scale(1.19 1)" text-anchor="middle">-10</text>
<text transform="translate(362.45 516.2) scale(1.19 1)" text-anchor="middle">-5</text>
<text transform="translate(584.65 514.3) scale(1.19 1)" text-anchor="middle">5</text>
<text transform="translate(691.5 514.3) scale(1.19 1)" text-anchor="middle">10</text>
<text transform="translate(798.35 514.3) scale(1.19 1)" text-anchor="middle">15</text>
<text transform="translate(537.2 134.55) rotate(-90) scale(1.17 1)" text-anchor="middle">15</text>
<text transform="translate(537.2 241.4) rotate(-90) scale(1.17 1)" text-anchor="middle">10</text>
<text transform="translate(537.2 348.25) rotate(-90) scale(1.17 1)" text-anchor="middle">5</text>
<text transform="translate(536.5 568.45) rotate(-90) scale(1.17 1)" text-anchor="middle">-5</text>
<text transform="translate(536.5 675.3) rotate(-90) scale(1.17 1)" text-anchor="middle">-10</text>
<text transform="translate(536.5 782.15) rotate(-90) scale(1.17 1)" text-anchor="middle">-15</text>
</g>
</svg>

<!-- vertical scrollbar + handle -->
<div class="abs" style="left:874px;top:91px;width:22px;height:744px;background:#fcfcfc"></div>
<div class="abs" style="left:882px;top:562px;width:6px;height:40px;background:#a3a3a3;border-radius:3px"></div>
<svg class="abs" style="left:899px;top:454px" width="6" height="16" viewBox="0 0 6 16"><circle cx="3" cy="3" r="1.300" fill="#111"/><circle cx="3" cy="7.800" r="1.300" fill="#111"/><circle cx="3" cy="12.600" r="1.300" fill="#111"/></svg>

<!-- dialog panel -->
<div class="abs" style="left:908px;top:109px;width:681px;height:740px;border:1px solid #c9c9c9;background:#f5f5f5"></div>
<div class="abs" style="left:910px;top:111px;width:677px;height:572.500px;border:1px solid #cfcfcf;background:#fff"></div>
<!-- tabs -->
<div class="abs" style="left:1154px;top:85.500px;width:97px;height:25.500px;border:1px solid #cdcdcd;border-bottom:none;background:#fff;border-radius:2px 2px 0 0"></div>
<svg class="abs" style="left:915px;top:86px" width="420" height="24" viewBox="915 86 420 24">
<g fill="#8c8c8c">
<rect x="920.800" y="100.700" width="6.200" height="5"/><circle cx="929.800" cy="97" r="1.600"/>
<path d="M922.500 94.500h5.800l-2.900 3.600z"/>
<path d="M963.100 91.300h5.600v7.900h-5.600zM963.100 101.200h5.600v3.700h-5.600zM970.900 91.300h6v3.900h-6zM970.900 97h6v7.900h-6z"/>
<path d="M1005 92.500h12v1.500h-12zM1005.400 95.800h6.400v4.900h-6.400zM1010 98.200h7v5.500h-7z"/>
<path d="M1092.500 98.200h5.500v-2.400l3.200 3.100-3.200 3.100v-2.400h-5.500z"/>
</g>
<g fill="none" stroke="#8c8c8c">
<path d="M925.400 96.500a5.900 5.900 0 1 1 5.400 6.300" stroke-width="1.500"/>
<rect x="1003.600" y="90.700" width="14.700" height="14.500" stroke-width="1"/>
<circle cx="1049.200" cy="95.800" r="4.100" stroke-width="1.400"/><path d="M1054 95.800h5.400v9.400h-9.900v-2.600" stroke-width="1.400"/>
<path d="M1096.100 96v-1.800l-2.900-2.900h-6.600v12.500h9.500v-2.600" stroke-width="1.400"/>
<path d="M1128.600 103.400c.3-4.600 4-9.400 11.200-10.900" stroke-width="1" stroke="#999"/>
<path d="M1128.500 96.200l2.200 2.300 2.600-.6M1135 92.500l1.200 2.600" stroke-width="1" stroke="#999"/>
</g>
<circle cx="1128.600" cy="103.600" r="1.300" fill="#999"/><circle cx="1139.800" cy="92.500" r="1.300" fill="#999"/>
<g fill="#111"><path d="M1169.900 92.200h10l-3.100 2.900h-10zM1169.300 97h10.600l-3.100 3.100h-10.600zM1169.300 102h10.600l-3.100 3.100h-10.600z"/></g>
<path d="M1228.500 94.700l7.300 7.300M1235.800 94.700l-7.300 7.300" stroke="#777" stroke-width="1.100" fill="none"/>
<path d="M1275 90.900h-11.500v12" fill="none" stroke="#8c8c8c" stroke-width="1"/>
<path d="M1278.400 90.600l-6.800 10.600c.4 1.700-.6 3.400-2.300 4-.8.300-2 .5-3 .3 1-.7 1.300-1.500 1.500-2.500.3-1.300 1.300-2.300 2.600-2.400l6.600-10z" fill="#8c8c8c"/>
<g fill="#8c8c8c"><path d="M1304.700 90.700h1v13.500h-1zM1307.700 91.700h7.500v2.200h-7.500zM1307.700 96.300h10v2.300h-10zM1307.700 101h5.600v2.200h-5.600z"/></g>
</svg>
<div class="abs" style="left:1183px;top:91px;font-size:13px;color:#2e2e2e;line-height:16px">Layers</div>

<div class="row sel" style="top:112px"><svg class="abs" style="left:5.500px;top:4.200px" width="17" height="16" viewBox="0 0 17 16"><path d="M.8 9.300C3 6.200 5.800 4.700 8.500 4.700S14 6.200 16.200 9.300C14 12.400 11.200 13.800 8.500 13.800S3 12.400.8 9.300z" fill="none" stroke="#111" stroke-width="1.300"/><circle cx="8.500" cy="9.200" r="3.300" fill="#111"/><circle cx="9.600" cy="8" r=".8" fill="#888"/><path d="M2.600 5.900L1.300 4.200M4.400 4.700L3.500 2.700M6.400 3.900L6 1.800M8.500 3.600V1.400M10.600 3.900l.4-2.100M12.600 4.700l.9-2M14.400 5.900l1.300-1.700" stroke="#111" stroke-width="1" fill="none"/></svg><svg class="abs" style="left:35px;top:5px" width="17" height="17" viewBox="0 0 17 17"><rect x="1.200" y="8.200" width="9.700" height="7.500" fill="#111"/><path d="M9.900 8.500V5.400a2.300 2.300 0 0 1 4.600 0v2.400" fill="none" stroke="#111" stroke-width="1.700"/></svg><b>layer1</b></div>
<div class="row" style="top:138px"><svg class="abs" style="left:5.500px;top:4.200px" width="17" height="16" viewBox="0 0 17 16"><path d="M.8 9.300C3 6.200 5.800 4.700 8.500 4.700S14 6.200 16.200 9.300C14 12.400 11.200 13.800 8.500 13.800S3 12.400.8 9.300z" fill="none" stroke="#111" stroke-width="1.300"/><circle cx="8.500" cy="9.200" r="3.300" fill="#111"/><circle cx="9.600" cy="8" r=".8" fill="#888"/><path d="M2.600 5.900L1.300 4.200M4.400 4.700L3.500 2.700M6.400 3.900L6 1.800M8.500 3.600V1.400M10.600 3.900l.4-2.100M12.600 4.700l.9-2M14.400 5.900l1.300-1.700" stroke="#111" stroke-width="1" fill="none"/></svg><svg class="abs" style="left:35px;top:5px" width="17" height="17" viewBox="0 0 17 17"><rect x="1.200" y="8.200" width="9.700" height="7.500" fill="#111"/><path d="M9.900 8.500V5.400a2.300 2.300 0 0 1 4.600 0v2.400" fill="none" stroke="#111" stroke-width="1.700"/></svg><b>layer2</b></div>
<div class="row" style="top:164px"><svg class="abs" style="left:5.500px;top:4.200px" width="17" height="16" viewBox="0 0 17 16"><path d="M.8 9.300C3 6.200 5.800 4.700 8.500 4.700S14 6.200 16.200 9.300C14 12.400 11.200 13.800 8.500 13.800S3 12.400.8 9.300z" fill="none" stroke="#111" stroke-width="1.300"/><circle cx="8.500" cy="9.200" r="3.300" fill="#111"/><circle cx="9.600" cy="8" r=".8" fill="#888"/><path d="M2.600 5.900L1.300 4.200M4.400 4.700L3.500 2.700M6.400 3.900L6 1.800M8.500 3.600V1.400M10.600 3.900l.4-2.100M12.600 4.700l.9-2M14.400 5.900l1.300-1.700" stroke="#111" stroke-width="1" fill="none"/></svg><svg class="abs" style="left:35px;top:5px" width="17" height="17" viewBox="0 0 17 17"><rect x="1.200" y="8.200" width="9.700" height="7.500" fill="#111"/><path d="M9.900 8.500V5.400a2.300 2.300 0 0 1 4.600 0v2.400" fill="none" stroke="#111" stroke-width="1.700"/></svg><b>layer3</b></div>
<div class="row" style="top:190px"><svg class="abs" style="left:5.500px;top:4.200px" width="17" height="16" viewBox="0 0 17 16"><path d="M.8 9.300C3 6.200 5.800 4.700 8.500 4.700S14 6.200 16.200 9.300C14 12.400 11.200 13.800 8.500 13.800S3 12.400.8 9.300z" fill="none" stroke="#111" stroke-width="1.300"/><circle cx="8.500" cy="9.200" r="3.300" fill="#111"/><circle cx="9.600" cy="8" r=".8" fill="#888"/><path d="M2.600 5.900L1.300 4.200M4.400 4.700L3.500 2.700M6.400 3.900L6 1.800M8.500 3.600V1.400M10.600 3.900l.4-2.100M12.600 4.700l.9-2M14.400 5.900l1.300-1.700" stroke="#111" stroke-width="1" fill="none"/></svg><svg class="abs" style="left:35px;top:5px" width="17" height="17" viewBox="0 0 17 17"><rect x="1.200" y="8.200" width="9.700" height="7.500" fill="#111"/><path d="M9.900 8.500V5.400a2.300 2.300 0 0 1 4.600 0v2.400" fill="none" stroke="#111" stroke-width="1.700"/></svg><b>layer4</b></div>
<div class="row" style="top:216px"><svg class="abs" style="left:5.500px;top:4.200px" width="17" height="16" viewBox="0 0 17 16"><path d="M.8 9.300C3 6.200 5.800 4.700 8.500 4.700S14 6.200 16.200 9.300C14 12.400 11.200 13.800 8.500 13.800S3 12.400.8 9.300z" fill="none" stroke="#111" stroke-width="1.300"/><circle cx="8.500" cy="9.200" r="3.300" fill="#111"/><circle cx="9.600" cy="8" r=".8" fill="#888"/><path d="M2.600 5.900L1.300 4.200M4.400 4.700L3.500 2.700M6.400 3.900L6 1.800M8.500 3.600V1.400M10.600 3.900l.4-2.100M12.600 4.700l.9-2M14.400 5.900l1.300-1.700" stroke="#111" stroke-width="1" fill="none"/></svg><svg class="abs" style="left:35px;top:5px" width="17" height="17" viewBox="0 0 17 17"><rect x="1.200" y="8.200" width="9.700" height="7.500" fill="#111"/><path d="M9.900 8.500V5.400a2.300 2.300 0 0 1 4.600 0v2.400" fill="none" stroke="#111" stroke-width="1.700"/></svg><b>layer5</b></div>
<div class="row" style="top:242px"><svg class="abs" style="left:5.500px;top:4.200px" width="17" height="16" viewBox="0 0 17 16"><path d="M.8 9.300C3 6.200 5.800 4.700 8.500 4.700S14 6.200 16.200 9.300C14 12.400 11.200 13.800 8.500 13.800S3 12.400.8 9.300z" fill="none" stroke="#111" stroke-width="1.300"/><circle cx="8.500" cy="9.200" r="3.300" fill="#111"/><circle cx="9.600" cy="8" r=".8" fill="#888"/><path d="M2.600 5.900L1.300 4.200M4.400 4.700L3.500 2.700M6.400 3.900L6 1.800M8.500 3.600V1.400M10.600 3.900l.4-2.100M12.600 4.700l.9-2M14.400 5.900l1.300-1.700" stroke="#111" stroke-width="1" fill="none"/></svg><svg class="abs" style="left:35px;top:5px" width="17" height="17" viewBox="0 0 17 17"><rect x="1.200" y="8.200" width="9.700" height="7.500" fill="#111"/><path d="M9.900 8.500V5.400a2.300 2.300 0 0 1 4.600 0v2.400" fill="none" stroke="#111" stroke-width="1.700"/></svg><b>layer6</b></div>
<div class="row" style="top:268px"><svg class="abs" style="left:5.500px;top:4.200px" width="17" height="16" viewBox="0 0 17 16"><path d="M.8 9.300C3 6.200 5.800 4.700 8.500 4.700S14 6.200 16.200 9.300C14 12.400 11.200 13.800 8.500 13.800S3 12.400.8 9.300z" fill="none" stroke="#111" stroke-width="1.300"/><circle cx="8.500" cy="9.200" r="3.300" fill="#111"/><circle cx="9.600" cy="8" r=".8" fill="#888"/><path d="M2.600 5.900L1.300 4.200M4.400 4.700L3.500 2.700M6.400 3.900L6 1.800M8.500 3.600V1.400M10.600 3.900l.4-2.100M12.600 4.700l.9-2M14.400 5.900l1.300-1.700" stroke="#111" stroke-width="1" fill="none"/></svg><svg class="abs" style="left:35px;top:5px" width="17" height="17" viewBox="0 0 17 17"><rect x="1.200" y="8.200" width="9.700" height="7.500" fill="#111"/><path d="M9.900 8.500V5.400a2.300 2.300 0 0 1 4.600 0v2.400" fill="none" stroke="#111" stroke-width="1.700"/></svg><b>layer7</b></div>
<div class="row" style="top:294px"><svg class="abs" style="left:5.500px;top:4.200px" width="17" height="16" viewBox="0 0 17 16"><path d="M.8 9.300C3 6.200 5.800 4.700 8.500 4.700S14 6.200 16.200 9.300C14 12.400 11.200 13.800 8.500 13.800S3 12.400.8 9.300z" fill="none" stroke="#111" stroke-width="1.300"/><circle cx="8.500" cy="9.200" r="3.300" fill="#111"/><circle cx="9.600" cy="8" r=".8" fill="#888"/><path d="M2.600 5.900L1.300 4.200M4.400 4.700L3.500 2.700M6.400 3.900L6 1.800M8.500 3.600V1.400M10.600 3.900l.4-2.100M12.600 4.700l.9-2M14.400 5.900l1.300-1.700" stroke="#111" stroke-width="1" fill="none"/></svg><svg class="abs" style="left:35px;top:5px" width="17" height="17" viewBox="0 0 17 17"><rect x="1.200" y="8.200" width="9.700" height="7.500" fill="#111"/><path d="M9.900 8.500V5.400a2.300 2.300 0 0 1 4.600 0v2.400" fill="none" stroke="#111" stroke-width="1.700"/></svg><b>layer8</b></div>
<div class="row" style="top:320px"><svg class="abs" style="left:5.500px;top:4.200px" width="17" height="16" viewBox="0 0 17 16"><path d="M.8 9.300C3 6.200 5.800 4.700 8.500 4.700S14 6.200 16.200 9.300C14 12.400 11.200 13.800 8.500 13.800S3 12.400.8 9.300z" fill="none" stroke="#111" stroke-width="1.300"/><circle cx="8.500" cy="9.200" r="3.300" fill="#111"/><circle cx="9.600" cy="8" r=".8" fill="#888"/><path d="M2.600 5.900L1.300 4.200M4.400 4.700L3.500 2.700M6.400 3.900L6 1.800M8.500 3.600V1.400M10.600 3.900l.4-2.100M12.600 4.700l.9-2M14.400 5.900l1.300-1.700" stroke="#111" stroke-width="1" fill="none"/></svg><svg class="abs" style="left:35px;top:5px" width="17" height="17" viewBox="0 0 17 17"><rect x="1.200" y="8.200" width="9.700" height="7.500" fill="#111"/><path d="M9.900 8.500V5.400a2.300 2.300 0 0 1 4.600 0v2.400" fill="none" stroke="#111" stroke-width="1.700"/></svg><b>layer9</b></div>
<div class="row" style="top:346px"><svg class="abs" style="left:5.500px;top:4.200px" width="17" height="16" viewBox="0 0 17 16"><path d="M.8 9.300C3 6.200 5.800 4.700 8.500 4.700S14 6.200 16.200 9.300C14 12.400 11.200 13.800 8.500 13.800S3 12.400.8 9.300z" fill="none" stroke="#111" stroke-width="1.300"/><circle cx="8.500" cy="9.200" r="3.300" fill="#111"/><circle cx="9.600" cy="8" r=".8" fill="#888"/><path d="M2.600 5.900L1.300 4.200M4.400 4.700L3.500 2.700M6.400 3.900L6 1.800M8.500 3.600V1.400M10.600 3.900l.4-2.100M12.600 4.700l.9-2M14.400 5.900l1.300-1.700" stroke="#111" stroke-width="1" fill="none"/></svg><svg class="abs" style="left:35px;top:5px" width="17" height="17" viewBox="0 0 17 17"><rect x="1.200" y="8.200" width="9.700" height="7.500" fill="#111"/><path d="M9.900 8.500V5.400a2.300 2.300 0 0 1 4.600 0v2.400" fill="none" stroke="#111" stroke-width="1.700"/></svg><b>layer10</b></div>
<div class="row" style="top:372px"><svg class="abs" style="left:5.500px;top:4.200px" width="17" height="16" viewBox="0 0 17 16"><path d="M.8 9.300C3 6.200 5.800 4.700 8.500 4.700S14 6.200 16.200 9.300C14 12.400 11.200 13.800 8.500 13.800S3 12.400.8 9.300z" fill="none" stroke="#111" stroke-width="1.300"/><circle cx="8.500" cy="9.200" r="3.300" fill="#111"/><circle cx="9.600" cy="8" r=".8" fill="#888"/><path d="M2.600 5.900L1.300 4.200M4.400 4.700L3.500 2.700M6.400 3.900L6 1.800M8.500 3.600V1.400M10.600 3.900l.4-2.100M12.600 4.700l.9-2M14.400 5.900l1.300-1.700" stroke="#111" stroke-width="1" fill="none"/></svg><svg class="abs" style="left:35px;top:5px" width="16" height="16" viewBox="0 0 16 16"><rect x="1" y="7" width="9.500" height="8" fill="#111"/><path d="M2.800 7.500V5a3 3 0 0 1 6 0v2.500" fill="none" stroke="#111" stroke-width="1.700"/></svg><b>Print Bed Outline</b></div>

<!-- list footer -->
<svg class="abs" style="left:915px;top:690px" width="672" height="22" viewBox="915 690 672 22">
<g fill="none" stroke="#111" stroke-width="1.900"><path d="M923.500 701h11M929 695.500v11M961.500 701h10.500"/>
<path d="M1529.500 694.500v12M1524.500 701.500l5 5.200 5-5.200M1567.500 693.500v10M1562.500 698.500l5 5.200 5-5.200M1562 707h11"/></g>
<g fill="none" stroke="#cfcfcf" stroke-width="1.900"><path d="M1453.500 697.500v10M1448.500 702.500l5-5.200 5 5.200M1448 694h11M1491.500 695.500v12M1486.500 700.500l5-5.200 5 5.200"/></g>
</svg>
<div class="abs" style="left:1376px;top:730.500px;font-size:13px;letter-spacing:.3px;color:#2e2e2e;line-height:16px">Blend mode:</div>
<div class="abs" style="left:1462px;top:723px;width:115px;height:30px;border:1px solid #cdcdcd;border-radius:3px;background:#fdfdfd;line-height:29px;padding-left:10px;font-size:13.500px;letter-spacing:.3px;color:#2e2e2e">Normal<svg class="abs" style="left:92px;top:12px" width="10" height="6" viewBox="0 0 10 6"><path d="M0 0h10l-5 5.500z" fill="#222"/></svg></div>
<div class="abs" style="left:909px;top:761px;width:679px;height:1px;background:#e1e1e1"></div>

<div class="abs" style="left:910px;top:771.500px;width:566px;height:31px;background:#c6c6c6;border-radius:3px;overflow:hidden"><div class="abs" style="left:0;top:0;width:7.500px;height:31px;background:#5b73c5"></div><div class="abs" style="left:5px;top:0;line-height:30px;font-size:13px;letter-spacing:.3px;color:#222">Blur (%)</div></div>
<div class="abs" style="left:1476.500px;top:770px;width:110px;height:33px;border:1px solid #d0d0d0;border-radius:3px;background:#fff;overflow:hidden;font-size:13px;line-height:32px;color:#222"><span class="abs" style="left:1px;letter-spacing:.3px">0.0</span><span class="abs" style="left:36px;width:37px;height:31px;border-left:1px solid #d9d9d9;background:#f8f8f8;text-align:center;font-size:19px;font-weight:bold;color:#bdbdbd">−</span><span class="abs" style="left:73px;width:37px;height:31px;border-left:1px solid #d9d9d9;background:#f8f8f8;text-align:center;font-size:19px;font-weight:bold;color:#111">+</span></div>

<div class="abs" style="left:910px;top:806px;width:566px;height:31px;background:#c6c6c6;border-radius:3px;overflow:hidden"><div class="abs" style="left:0;top:0;width:550px;height:31px;background:#5b73c5"></div><div class="abs" style="left:5px;top:0;line-height:29px;font-size:13px;letter-spacing:.3px;color:#fff">Opacity (%)</div></div>
<div class="abs" style="left:1476.500px;top:804px;width:110px;height:33px;border:1px solid #d0d0d0;border-radius:3px;background:#fff;overflow:hidden;font-size:13px;line-height:30px;color:#222"><span class="abs" style="left:1px;letter-spacing:.3px">97.2</span><span class="abs" style="left:36px;width:37px;height:31px;border-left:1px solid #d9d9d9;background:#f8f8f8;text-align:center;font-size:19px;font-weight:bold;color:#111">−</span><span class="abs" style="left:73px;width:37px;height:31px;border-left:1px solid #d9d9d9;background:#f8f8f8;text-align:center;font-size:19px;font-weight:bold;color:#111">+</span></div>

</body></html>
